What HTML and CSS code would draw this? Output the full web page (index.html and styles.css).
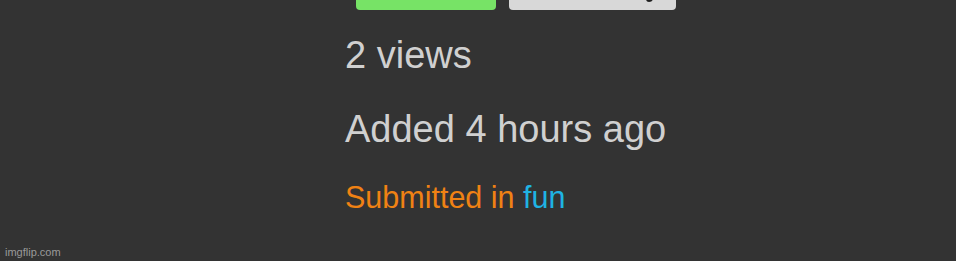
FILE: index.html
```html
<!DOCTYPE html>
<html lang="en">
<head>
    <meta charset="UTF-8">
    <title>imgflip - image</title>
    <link rel="stylesheet" href="styles.css">
</head>
<body>
    <div id="image-info">
        <div class="actions">
            <button class="vote-button" aria-label="Upvote"></button>
            <button class="menu-button" aria-label="Category"><span class="tail"></span></button>
        </div>
        <div class="views">2 views</div>
        <div class="added">Added 4 hours ago</div>
        <div class="submitted">Submitted in <a href="#" class="stream-link">fun</a></div>
    </div>
    <div class="watermark">imgflip.com</div>
</body>
</html>
```

FILE: styles.css
```css
body {
    font-family: "Liberation Sans", Arial, sans-serif;
    margin: 0;
    padding: 0;
    background-color: #333333;
    height: 261px;
    overflow: hidden;
    position: relative;
}

#image-info {
    padding-left: 345px;
}

/* buttons are cut off by the top of the window */
.actions {
    display: flex;
    gap: 13px;
    margin-left: 11px;
    margin-top: -30px;
}

.vote-button, .menu-button {
    height: 40px;
    border: none;
    border-radius: 4px;
    padding: 0;
}

.vote-button {
    width: 140px;
    background-color: #77e366;
}

.menu-button {
    width: 167px;
    background-color: #d8d8d8;
    position: relative;
}

/* descender of the button label, the rest is above the window */
.tail {
    position: absolute;
    left: 137px;
    bottom: 8px;
    width: 7px;
    height: 4px;
    background-color: #1e1e1e;
    border-radius: 0 0 4px 3px;
}

.views, .added {
    color: #d0d0d0;
    font-size: 38px;
    line-height: 38px;
}

.views {
    margin-top: 26px;
}

.added {
    margin-top: 36px;
}

.submitted {
    color: #f08214;
    font-size: 30.5px;
    line-height: 30.5px;
    margin-top: 34px;
}

.stream-link {
    color: #1fb3e3;
    text-decoration: none;
}

.watermark {
    position: absolute;
    left: 5px;
    bottom: 3px;
    font-size: 11px;
    line-height: 11px;
    color: #9a9a9a;
}
```
